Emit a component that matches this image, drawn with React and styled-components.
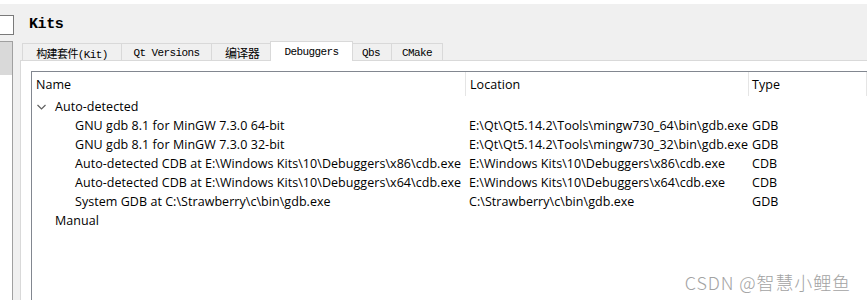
import React from 'react';
import styled, { createGlobalStyle } from 'styled-components';

const Global = createGlobalStyle`
  html, body { margin: 0; padding: 0; background: #fff; }
  #root { width: 867px; height: 300px; }
`;

const Screen = styled.div`
  position: relative;
  box-sizing: border-box;
  width: 867px;
  height: 300px;
  overflow: hidden;
  background: #f0f0f0;
  border-top: 4px solid #fff;
  display: flex;
`;

const LeftColumn = styled.div`
  width: 14px;
  flex: none;
  display: flex;
  flex-direction: column;
  overflow: hidden;
`;

const SearchBox = styled.div`
  box-sizing: border-box;
  margin-top: 11px;
  width: 14px;
  height: 20px;
  background: #fff;
  border: 1px solid #7a7a7a;
  border-left-width: 0;
`;

const ListPanel = styled.div`
  box-sizing: border-box;
  margin-top: 6px;
  width: 13px;
  flex: 1;
  background: #fff;
  border-top: 1px solid #a0a0a0;
  border-right: 1px solid #a0a0a0;
`;

const ListSelected = styled.div`
  height: 33px;
  background: #d9d9d9;
`;

const RightColumn = styled.div`
  flex: 1;
  margin-left: 6px;
  display: flex;
  flex-direction: column;
  min-width: 0;
`;

const Title = styled.div`
  box-sizing: border-box;
  height: 37px;
  padding: 13px 0 0 9px;
  font-family: "Liberation Mono", "DejaVu Sans Mono", monospace;
  font-weight: bold;
  font-size: 15px;
  line-height: 16px;
  letter-spacing: -0.4px;
  color: #000;
`;

const TabBar = styled.div`
  display: flex;
  align-items: flex-end;
  height: 19px;
  padding-left: 2px;
`;

const Tab = styled.div`
  box-sizing: border-box;
  position: relative;
  width: ${(p) => p.$w}px;
  height: ${(p) => (p.$active ? 20 : 17)}px;
  margin-left: ${(p) => (p.$first ? 0 : p.$active ? -3 : -1)}px;
  margin-right: ${(p) => (p.$active ? -2 : 0)}px;
  margin-bottom: ${(p) => (p.$active ? -1 : 0)}px;
  z-index: ${(p) => (p.$active ? 2 : 1)};
  background: ${(p) => (p.$active ? '#fff' : '#f0f0f0')};
  border: 1px solid #d9d9d9;
  border-bottom: none;
  display: flex;
  align-items: center;
  justify-content: center;
  padding-top: ${(p) => (p.$active ? 0 : 1)}px;
  font-family: "Liberation Mono", "Noto Sans CJK SC", monospace;
  font-size: 11px;
  letter-spacing: -0.6px;
  color: #000;
  white-space: nowrap;
`;

const TabLabel = styled.span`
  font-size: ${(p) => (p.$cjk ? 12 : 11)}px;
`;

const Pane = styled.div`
  flex: 1;
  background: #fff;
  border-top: 1px solid #d9d9d9;
  border-left: 1px solid #d9d9d9;
  padding: 10px 0 0 10px;
  display: flex;
  min-width: 0;
`;

const Tree = styled.div`
  flex: 1;
  background: #fff;
  border-top: 1px solid #828790;
  border-left: 1px solid #828790;
  font-family: "Open Sans", "Noto Sans CJK SC", sans-serif;
  font-size: 12.5px;
  letter-spacing: 0.05px;
  color: #000;
  min-width: 0;
`;

const HeaderRow = styled.div`
  display: grid;
  grid-template-columns: 434px 283px 1fr;
  height: 25px;
`;

const HeaderCell = styled.div`
  box-sizing: border-box;
  display: flex;
  align-items: center;
  padding-left: ${(p) => p.$pad}px;
  border-right: 1px solid #e5e5e5;
  margin-bottom: 1px;
  white-space: nowrap;
`;

const Row = styled.div`
  display: grid;
  grid-template-columns: 434px 283px 1fr;
  height: 19px;
  align-items: center;
  white-space: nowrap;
`;

const NameCell = styled.div`
  display: flex;
  align-items: center;
  padding-left: ${(p) => p.$indent}px;
  overflow: hidden;
`;

const Cell = styled.div`
  padding-left: 3px;
  overflow: hidden;
`;

const Chevron = styled.svg`
  width: 9px;
  height: 6px;
  margin-right: 9px;
  flex: none;
`;

const Watermark = styled.div`
  position: absolute;
  right: 16px;
  bottom: 7px;
  font-family: "Noto Sans CJK SC", "Noto Sans", sans-serif;
  font-weight: 300;
  font-size: 18px;
  line-height: 22px;
  color: #a3a3a3;
  text-shadow: 0 0 1px #fff;
  letter-spacing: 0.9px;
`;

const tabs = [
  { label: '构建套件(Kit)', w: 100 },
  { label: 'Qt Versions', w: 91 },
  { label: '编译器', w: 62, cjk: true },
  { label: 'Debuggers', w: 83, active: true },
  { label: 'Qbs', w: 42 },
  { label: 'CMake', w: 52 },
];

const debuggers = [
  ['GNU gdb 8.1 for MinGW 7.3.0 64-bit', 'E:\\Qt\\Qt5.14.2\\Tools\\mingw730_64\\bin\\gdb.exe', 'GDB'],
  ['GNU gdb 8.1 for MinGW 7.3.0 32-bit', 'E:\\Qt\\Qt5.14.2\\Tools\\mingw730_32\\bin\\gdb.exe', 'GDB'],
  ['Auto-detected CDB at E:\\Windows Kits\\10\\Debuggers\\x86\\cdb.exe', 'E:\\Windows Kits\\10\\Debuggers\\x86\\cdb.exe', 'CDB'],
  ['Auto-detected CDB at E:\\Windows Kits\\10\\Debuggers\\x64\\cdb.exe', 'E:\\Windows Kits\\10\\Debuggers\\x64\\cdb.exe', 'CDB'],
  ['System GDB at C:\\Strawberry\\c\\bin\\gdb.exe', 'C:\\Strawberry\\c\\bin\\gdb.exe', 'GDB'],
];

export default function App() {
  return (
    <>
      <Global />
      <Screen>
        <LeftColumn>
          <SearchBox />
          <ListPanel>
            <ListSelected />
          </ListPanel>
        </LeftColumn>
        <RightColumn>
          <Title>Kits</Title>
          <TabBar>
            {tabs.map((t, i) => (
              <Tab key={t.label} $w={t.w} $active={t.active} $first={i === 0}>
                <TabLabel $cjk={t.cjk}>{t.label}</TabLabel>
              </Tab>
            ))}
          </TabBar>
          <Pane>
            <Tree>
              <HeaderRow>
                <HeaderCell $pad={4}>Name</HeaderCell>
                <HeaderCell $pad={4}>Location</HeaderCell>
                <HeaderCell $pad={3}>Type</HeaderCell>
              </HeaderRow>
              <Row>
                <NameCell $indent={5}>
                  <Chevron viewBox="0 0 9 6">
                    <path d="M0.5 1 L4.5 5 L8.5 1" fill="none" stroke="#606060" strokeWidth="1.2" />
                  </Chevron>
                  Auto-detected
                </NameCell>
                <Cell />
                <Cell />
              </Row>
              {debuggers.map((d) => (
                <Row key={d[0]}>
                  <NameCell $indent={43}>{d[0]}</NameCell>
                  <Cell>{d[1]}</Cell>
                  <Cell>{d[2]}</Cell>
                </Row>
              ))}
              <Row>
                <NameCell $indent={23}>Manual</NameCell>
                <Cell />
                <Cell />
              </Row>
            </Tree>
          </Pane>
        </RightColumn>
        <Watermark>CSDN @智慧小鲤鱼</Watermark>
      </Screen>
    </>
  );
}
